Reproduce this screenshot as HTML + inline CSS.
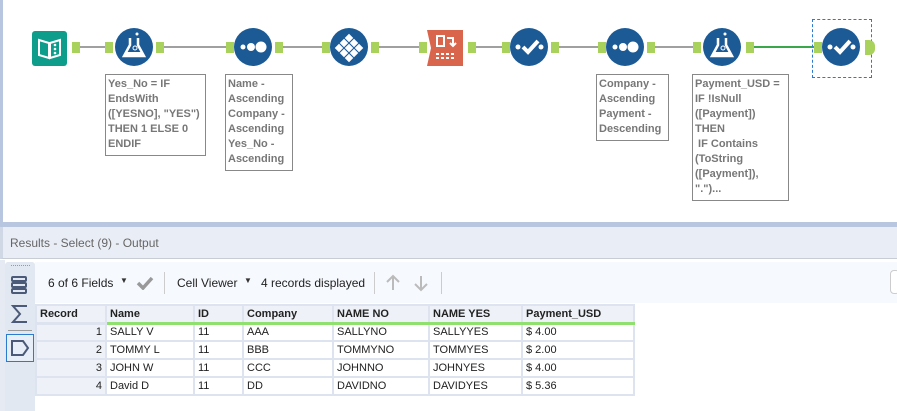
<!DOCTYPE html>
<html><head><meta charset="utf-8"><style>
*{margin:0;padding:0;box-sizing:border-box}
body{width:897px;height:411px;overflow:hidden;background:#fff;font-family:"Liberation Sans",sans-serif;position:relative}
.a{position:absolute}
.ann{position:absolute;border:1px solid #888;background:#fff;color:#777;font-weight:bold;font-size:11px;line-height:15px;padding:2px 2px;white-space:pre}
.c{position:absolute;width:38px;height:38px;border-radius:50%;background:#1c5a96;top:28px}
.an{position:absolute;width:8px;height:11px;background:#a8d25c;top:42px}
.ln{position:absolute;height:2px;background:#a0a0a0;top:46px}
table{border-collapse:collapse;font-size:11px;color:#222}
td{border:2px solid #dde4ef;height:18px;padding:0 3px;white-space:nowrap}
th{border:2px solid #dde4ef;border-bottom:3px solid #90e070;height:18px;padding:0 3px;text-align:left;background:#eef2f8;font-weight:bold}
</style></head><body>
<div class="a" style="left:0;top:0;width:3px;height:222px;background:#b8c6e0"></div>
<div class="ln" style="left:79px;width:26px"></div>
<div class="ln" style="left:160px;width:66px"></div>
<div class="ln" style="left:279px;width:53px"></div>
<div class="ln" style="left:375px;width:45px"></div>
<div class="ln" style="left:472px;width:32px"></div>
<div class="ln" style="left:555px;width:50px"></div>
<div class="ln" style="left:651px;width:47px"></div>
<div class="ln" style="left:750px;width:64px;background:#3aa84a"></div>
<div class="a" style="left:32px;top:31px;width:35px;height:35px;background:#0e9d8a;border-radius:3px">
<svg width="35" height="35"><path d="M7 9 L17 12 L17 27 L7 24Z M18 12 L28 9 L28 24 L18 27Z" fill="none" stroke="#fff" stroke-width="2"/><circle cx="23" cy="14" r="1.3" fill="#fff"/><circle cx="23" cy="18" r="1.3" fill="#fff"/><circle cx="23" cy="22" r="1.3" fill="#fff"/></svg></div>
<div class="an" style="left:72px"></div>
<div class="an" style="left:105px"></div>
<div class="c" style="left:115px"><svg width="38" height="38"><path d="M15 10 L15 17 L9 28 L29 28 L23 17 L23 10" fill="none" stroke="#fff" stroke-width="2.5"/><path d="M11 24 L27 24 L28 27 L10 27Z" fill="#fff"/><circle cx="20" cy="20" r="2" fill="none" stroke="#fff"/><circle cx="22" cy="6" r="1.5" fill="#fff"/></svg></div>
<div class="an" style="left:156px"></div>
<div class="ann" style="left:105px;top:74px;width:101px;height:82px">Yes_No = IF
EndsWith
([YESNO], "YES")
THEN 1 ELSE 0
ENDIF</div>
<div class="an" style="left:226px"></div>
<div class="c" style="left:234px"><svg width="38" height="38"><circle cx="9" cy="19" r="2.5" fill="#fff"/><circle cx="17" cy="19" r="4" fill="#fff"/><circle cx="27" cy="19" r="5.5" fill="#fff"/></svg></div>
<div class="an" style="left:275px"></div>
<div class="ann" style="left:225px;top:74px;width:68px;height:97px">Name -
Ascending
Company -
Ascending
Yes_No -
Ascending</div>
<div class="an" style="left:322px"></div>
<div class="c" style="left:330px"><svg width="38" height="38"><g fill="#fff"><rect x="16" y="7" width="6" height="6" transform="rotate(45 19 10)"/><rect x="11" y="12" width="6" height="6" transform="rotate(45 14 15)"/><rect x="21" y="12" width="6" height="6" transform="rotate(45 24 15)"/><rect x="6" y="17" width="6" height="6" transform="rotate(45 9 20)"/><rect x="16" y="17" width="6" height="6" transform="rotate(45 19 20)"/><rect x="26" y="17" width="6" height="6" transform="rotate(45 29 20)"/><rect x="11" y="22" width="6" height="6" transform="rotate(45 14 25)"/><rect x="21" y="22" width="6" height="6" transform="rotate(45 24 25)"/><rect x="16" y="27" width="6" height="6" transform="rotate(45 19 30)"/></g></svg></div>
<div class="an" style="left:371px"></div>
<div class="an" style="left:419px"></div>
<div class="a" style="left:427px;top:30px;width:36px;height:36px"><svg width="36" height="36"><path d="M0 0 L36 0 L36 36 L0 36 L4 18Z" fill="#d9654c"/><g stroke="#fff" stroke-width="2" fill="none"><rect x="10" y="6" width="7" height="10"/><path d="M20 8 L26 8 L26 16 M23 13 L26 16 L29 13"/><path d="M9 24 L29 24 M9 28 L29 28" stroke-dasharray="3 2"/></g></svg></div>
<div class="an" style="left:468px"></div>
<div class="an" style="left:502px"></div>
<div class="c" style="left:510px"><svg width="38" height="38"><circle cx="8" cy="19" r="2.5" fill="#fff"/><path d="M13 19 L18 24 L28 13" fill="none" stroke="#fff" stroke-width="4"/><circle cx="31" cy="19" r="2.5" fill="#fff"/></svg></div>
<div class="an" style="left:551px"></div>
<div class="an" style="left:598px"></div>
<div class="c" style="left:606px"><svg width="38" height="38"><circle cx="9" cy="19" r="2.5" fill="#fff"/><circle cx="17" cy="19" r="4" fill="#fff"/><circle cx="27" cy="19" r="5.5" fill="#fff"/></svg></div>
<div class="an" style="left:647px"></div>
<div class="ann" style="left:596px;top:74px;width:73px;height:67px">Company -
Ascending
Payment -
Descending</div>
<div class="an" style="left:693px"></div>
<div class="c" style="left:703px"><svg width="38" height="38"><path d="M15 10 L15 17 L9 28 L29 28 L23 17 L23 10" fill="none" stroke="#fff" stroke-width="2.5"/><path d="M11 24 L27 24 L28 27 L10 27Z" fill="#fff"/><circle cx="20" cy="20" r="2" fill="none" stroke="#fff"/><circle cx="22" cy="6" r="1.5" fill="#fff"/></svg></div>
<div class="an" style="left:746px"></div>
<div class="ann" style="left:692px;top:74px;width:97px;height:127px">Payment_USD =
IF !IsNull
([Payment])
THEN
 IF Contains
(ToString
([Payment]),
".")...</div>
<div class="a" style="left:812px;top:19px;width:60px;height:59px;border:1px dashed #2a7ad0"></div>
<div class="an" style="left:814px"></div>
<div class="c" style="left:822px"><svg width="38" height="38"><circle cx="8" cy="19" r="2.5" fill="#fff"/><path d="M13 19 L18 24 L28 13" fill="none" stroke="#fff" stroke-width="4"/><circle cx="31" cy="19" r="2.5" fill="#fff"/></svg></div>
<div class="a" style="left:865px;top:40px;width:10px;height:15px;background:#a8d25c;border-radius:0 6px 6px 0"></div>
<div class="a" style="left:0;top:222px;width:897px;height:5px;background:#b8c6e0"></div>
<div class="a" style="left:0;top:227px;width:897px;height:32px;background:#e9edf6;border-bottom:1px solid #c8ccd4;border-left:3px solid #d0d8e6"></div>
<div class="a" style="left:10px;top:236px;font-size:12px;color:#666">Results - Select (9) - Output</div>
<div class="a" style="left:0;top:260px;width:5px;height:151px;background:#e6eaf2"></div>
<div class="a" style="left:5px;top:262px;width:30px;height:149px;background:#e2e8f1;border-radius:3px 3px 0 0"></div>
<div class="a" style="left:11px;top:265px;width:19px;border-top:1px dotted #999"></div>
<svg class="a" style="left:10px;top:276px" width="20" height="20"><g fill="none" stroke="#4a5a78" stroke-width="2"><rect x="2" y="1" width="14" height="4" rx="1"/><rect x="2" y="7" width="14" height="4" rx="1"/><rect x="2" y="13" width="14" height="4" rx="1"/></g></svg>
<svg class="a" style="left:10px;top:304px" width="20" height="20"><path d="M17 2 L3 2 L10 10 L3 18 L17 18" fill="none" stroke="#4a5a78" stroke-width="2"/></svg>
<div class="a" style="left:8px;top:330px;width:24px;height:1px;background:#999"></div>
<div class="a" style="left:6px;top:334px;width:28px;height:28px;border:1px solid #2a7ad0;background:#e8eef7"></div>
<svg class="a" style="left:9px;top:337px" width="22" height="22"><path d="M3 4 L14 4 L19 11 L14 18 L3 18Z" fill="none" stroke="#4a5a78" stroke-width="2"/></svg>
<div class="a" style="left:35px;top:262px;width:862px;height:41px;background:#f6f9fd"></div>
<div class="a" style="left:48px;top:276px;font-size:12px;color:#222">6 of 6 Fields</div>
<div class="a" style="left:120px;top:276px;font-size:8px;color:#333">▼</div>
<svg class="a" style="left:136px;top:276px" width="18" height="14"><path d="M2 7 L7 12 L16 2" fill="none" stroke="#999" stroke-width="3.5"/></svg>
<div class="a" style="left:164px;top:272px;width:1px;height:22px;background:#ccc"></div>
<div class="a" style="left:177px;top:276px;font-size:12px;color:#222">Cell Viewer</div>
<div class="a" style="left:244px;top:276px;font-size:8px;color:#333">▼</div>
<div class="a" style="left:261px;top:276px;font-size:12px;color:#222">4 records displayed</div>
<div class="a" style="left:374px;top:272px;width:1px;height:22px;background:#ccc"></div>
<svg class="a" style="left:385px;top:274px" width="50" height="18"><g fill="none" stroke="#bbb" stroke-width="2"><path d="M8 16 L8 2 M2 8 L8 2 L14 8"/><path d="M36 2 L36 16 M30 10 L36 16 L42 10"/></g></svg>
<div class="a" style="left:441px;top:272px;width:1px;height:22px;background:#ccc"></div>
<div class="a" style="left:890px;top:270px;width:10px;height:24px;border:1px solid #ccc;border-radius:4px;background:#fff"></div>
<table class="a" style="left:35px;top:304px;width:600px">
<tr><th style="width:70px;border-bottom:3px solid #dde4ef">Record</th><th style="width:88px">Name</th><th style="width:49px">ID</th><th style="width:90px">Company</th><th style="width:96px">NAME NO</th><th style="width:93px">NAME YES</th><th>Payment_USD</th></tr>
<tr><td style="text-align:right;background:#eef2f8">1</td><td>SALLY V</td><td>11</td><td>AAA</td><td>SALLYNO</td><td>SALLYYES</td><td>$ 4.00</td></tr>
<tr><td style="text-align:right;background:#eef2f8">2</td><td>TOMMY L</td><td>11</td><td>BBB</td><td>TOMMYNO</td><td>TOMMYES</td><td>$ 2.00</td></tr>
<tr><td style="text-align:right;background:#eef2f8">3</td><td>JOHN W</td><td>11</td><td>CCC</td><td>JOHNNO</td><td>JOHNYES</td><td>$ 4.00</td></tr>
<tr><td style="text-align:right;background:#eef2f8">4</td><td>David D</td><td>11</td><td>DD</td><td>DAVIDNO</td><td>DAVIDYES</td><td>$ 5.36</td></tr>
</table>
</body></html>
